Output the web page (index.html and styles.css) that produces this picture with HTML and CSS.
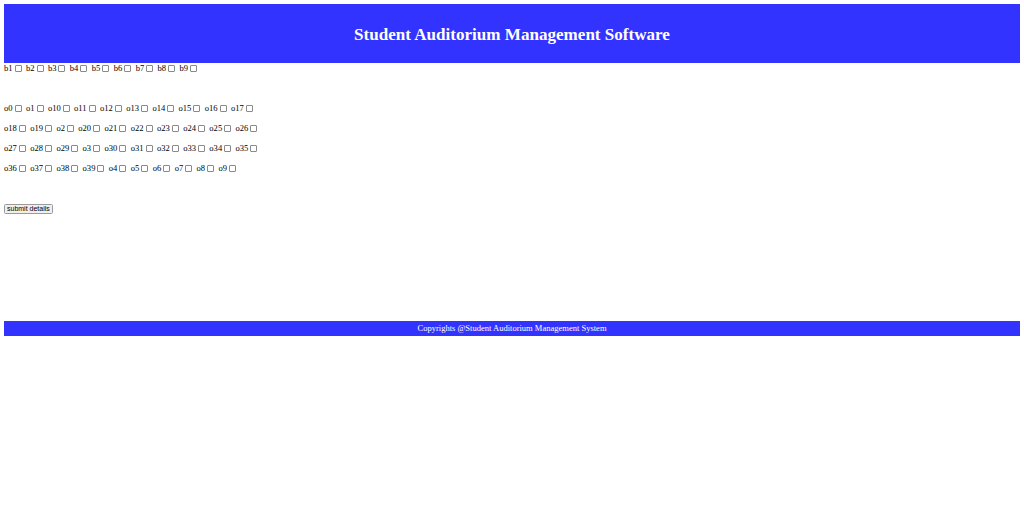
FILE: index.html
```html
<!DOCTYPE html>
<html>
<head>
<meta charset="utf-8">
<title>Student Auditorium Management Software</title>
<link rel="stylesheet" href="styles.css">
</head>
<body>
<div class="header"><h1 class="title">Student Auditorium Management Software</h1></div>
<form class="form">
  <div class="row">
    <span class="item">b1<input type="checkbox" class="cb"></span>
    <span class="item">b2<input type="checkbox" class="cb"></span>
    <span class="item">b3<input type="checkbox" class="cb"></span>
    <span class="item">b4<input type="checkbox" class="cb"></span>
    <span class="item">b5<input type="checkbox" class="cb"></span>
    <span class="item">b6<input type="checkbox" class="cb"></span>
    <span class="item">b7<input type="checkbox" class="cb"></span>
    <span class="item">b8<input type="checkbox" class="cb"></span>
    <span class="item">b9<input type="checkbox" class="cb"></span>
  </div>
  <div class="rows">
    <div class="row">
      <span class="item">o0<input type="checkbox" class="cb"></span>
      <span class="item">o1<input type="checkbox" class="cb"></span>
      <span class="item">o10<input type="checkbox" class="cb"></span>
      <span class="item">o11<input type="checkbox" class="cb"></span>
      <span class="item">o12<input type="checkbox" class="cb"></span>
      <span class="item">o13<input type="checkbox" class="cb"></span>
      <span class="item">o14<input type="checkbox" class="cb"></span>
      <span class="item">o15<input type="checkbox" class="cb"></span>
      <span class="item">o16<input type="checkbox" class="cb"></span>
      <span class="item">o17<input type="checkbox" class="cb"></span>
    </div>
    <div class="row">
      <span class="item">o18<input type="checkbox" class="cb"></span>
      <span class="item">o19<input type="checkbox" class="cb"></span>
      <span class="item">o2<input type="checkbox" class="cb"></span>
      <span class="item">o20<input type="checkbox" class="cb"></span>
      <span class="item">o21<input type="checkbox" class="cb"></span>
      <span class="item">o22<input type="checkbox" class="cb"></span>
      <span class="item">o23<input type="checkbox" class="cb"></span>
      <span class="item">o24<input type="checkbox" class="cb"></span>
      <span class="item">o25<input type="checkbox" class="cb"></span>
      <span class="item">o26<input type="checkbox" class="cb"></span>
    </div>
    <div class="row">
      <span class="item">o27<input type="checkbox" class="cb"></span>
      <span class="item">o28<input type="checkbox" class="cb"></span>
      <span class="item">o29<input type="checkbox" class="cb"></span>
      <span class="item">o3<input type="checkbox" class="cb"></span>
      <span class="item">o30<input type="checkbox" class="cb"></span>
      <span class="item">o31<input type="checkbox" class="cb"></span>
      <span class="item">o32<input type="checkbox" class="cb"></span>
      <span class="item">o33<input type="checkbox" class="cb"></span>
      <span class="item">o34<input type="checkbox" class="cb"></span>
      <span class="item">o35<input type="checkbox" class="cb"></span>
    </div>
    <div class="row">
      <span class="item">o36<input type="checkbox" class="cb"></span>
      <span class="item">o37<input type="checkbox" class="cb"></span>
      <span class="item">o38<input type="checkbox" class="cb"></span>
      <span class="item">o39<input type="checkbox" class="cb"></span>
      <span class="item">o4<input type="checkbox" class="cb"></span>
      <span class="item">o5<input type="checkbox" class="cb"></span>
      <span class="item">o6<input type="checkbox" class="cb"></span>
      <span class="item">o7<input type="checkbox" class="cb"></span>
      <span class="item">o8<input type="checkbox" class="cb"></span>
      <span class="item">o9<input type="checkbox" class="cb"></span>
    </div>
  </div>
  <div class="actions"><button type="button" class="submit">submit details</button></div>
</form>
<div class="footer">Copyrights @Student Auditorium Management System</div>
</body>
</html>
```
FILE: styles.css
```css
html {
  background: #ffffff;
}
body {
  margin: 4px;
  font-family: "Liberation Serif", "Times New Roman", serif;
  font-size: 8.53px;
  color: #000000;
}
.header {
  height: 59px;
  background: #3333ff;
  display: flex;
  align-items: center;
  justify-content: center;
}
.title {
  margin: 0;
  font-size: 17.07px;
  font-weight: bold;
  color: #ffffff;
  line-height: 20px;
  position: relative;
  top: 1px;
}
.form {
  display: flex;
  flex-direction: column;
  margin: 0;
}
.row {
  height: 10px;
  line-height: 10px;
  white-space: nowrap;
}
.item {
  margin-right: 0.6px;
}
.cb {
  appearance: none;
  -webkit-appearance: none;
  box-sizing: border-box;
  width: 7px;
  height: 7px;
  margin: 0 1.6px 0 2.1px;
  border: 1px solid #8a8a8a;
  border-radius: 1px;
  background: #ffffff;
  vertical-align: -1px;
}
.rows {
  margin-top: 30px;
  display: flex;
  flex-direction: column;
  gap: 10px;
}
.actions {
  margin-top: 31px;
  display: flex;
}
.submit {
  box-sizing: border-box;
  height: 10px;
  padding: 0 2px;
  font-family: "Liberation Sans", Arial, sans-serif;
  font-size: 7px;
  line-height: 8px;
  color: #000000;
  background: #efefef;
  border: 1px solid #9a9a9a;
  border-radius: 1.5px;
}
.footer {
  margin-top: 107px;
  height: 15px;
  background: #3333ff;
  color: #ffffff;
  text-align: center;
  line-height: 15px;
}
```
